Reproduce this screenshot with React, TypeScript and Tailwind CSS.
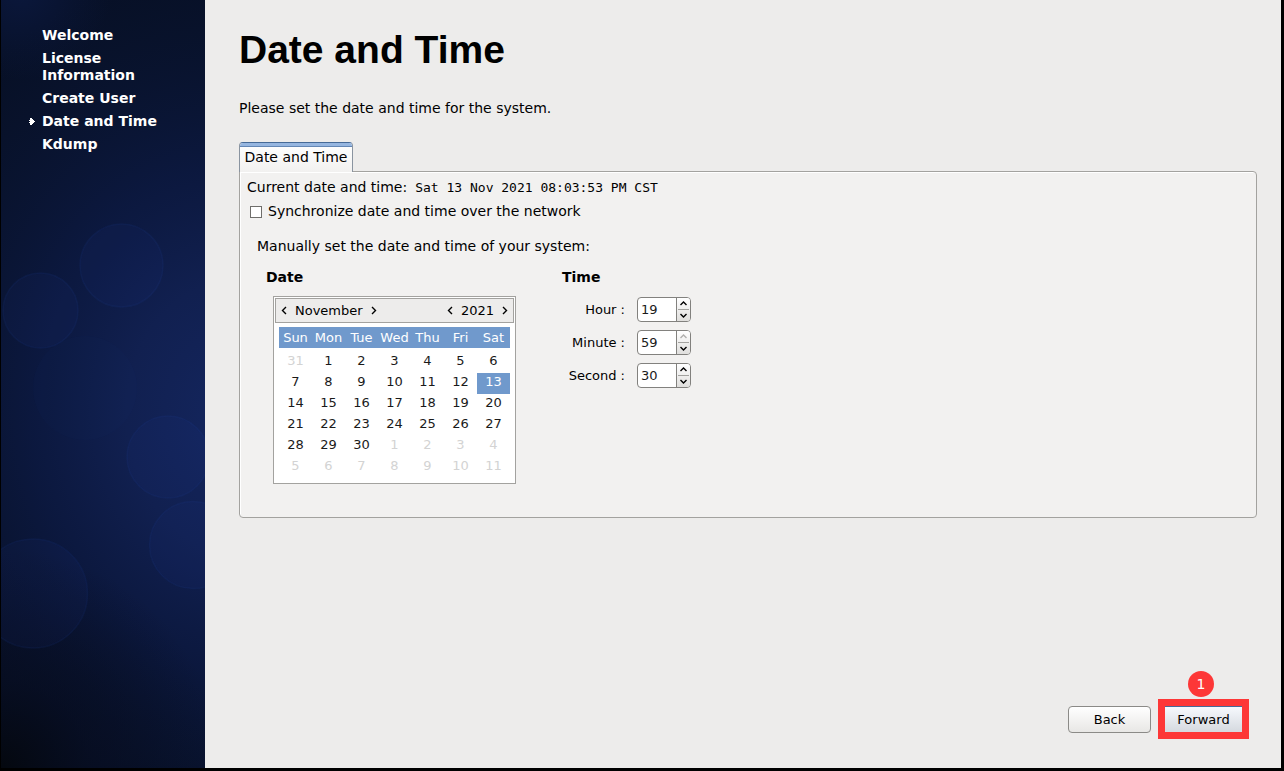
import { useState } from "react";

const STEPS = ["Welcome", "License Information", "Create User", "Date and Time", "Kdump"];
const CURRENT_STEP = "Date and Time";

const WEEKDAYS = ["Sun", "Mon", "Tue", "Wed", "Thu", "Fri", "Sat"];
const WEEKS = [
  [31, 1, 2, 3, 4, 5, 6],
  [7, 8, 9, 10, 11, 12, 13],
  [14, 15, 16, 17, 18, 19, 20],
  [21, 22, 23, 24, 25, 26, 27],
  [28, 29, 30, 1, 2, 3, 4],
  [5, 6, 7, 8, 9, 10, 11],
];

function isOtherMonth(week: number, day: number) {
  return (week === 0 && day > 7) || (week > 3 && day < 15);
}

type Direction = "left" | "right" | "up" | "down";

const CHEVRONS: Record<Direction, string> = {
  left: "M6 1 2.500 4.500 6 8",
  right: "M3 1 6.500 4.500 3 8",
  up: "M1.500 6 4.500 3 7.500 6",
  down: "M1.500 3 4.500 6 7.500 3",
};

function Chevron({ direction }: { direction: Direction }) {
  return (
    <svg viewBox="0 0 9 9" className="size-[9px]" fill="none" stroke="currentColor" strokeWidth="1.4" aria-hidden="true">
      <path d={CHEVRONS[direction]} />
    </svg>
  );
}

function SidebarBackdrop() {
  return (
    <svg
      className="absolute inset-0 size-full"
      viewBox="0 0 204 768"
      preserveAspectRatio="xMidYMid slice"
      aria-hidden="true"
    >
      <defs>
        <radialGradient id="glow" gradientUnits="userSpaceOnUse" cx="0" cy="0" r="1" gradientTransform="translate(240 420) rotate(-8) scale(380 460)">
          <stop offset="0" stopColor="#14265f" />
          <stop offset="0.3" stopColor="#112050" />
          <stop offset="0.55" stopColor="#0c1941" stopOpacity="0.9" />
          <stop offset="1" stopColor="#0a1532" stopOpacity="0" />
        </radialGradient>
        <radialGradient id="topGlow" gradientUnits="userSpaceOnUse" cx="20" cy="-10" r="90">
          <stop offset="0" stopColor="#0b183e" stopOpacity="0.9" />
          <stop offset="1" stopColor="#0b183e" stopOpacity="0" />
        </radialGradient>
        <radialGradient id="shade" gradientUnits="userSpaceOnUse" cx="0" cy="768" r="220">
          <stop offset="0" stopColor="#04080f" />
          <stop offset="0.4" stopColor="#060b1c" stopOpacity="0.6" />
          <stop offset="1" stopColor="#060b1c" stopOpacity="0" />
        </radialGradient>
      </defs>
      <rect width="204" height="768" fill="#071026" />
      <rect width="204" height="768" fill="url(#topGlow)" />
      <rect width="204" height="768" fill="url(#glow)" />
      <rect width="204" height="768" fill="url(#shade)" />
      <g fill="#2340a0" fillOpacity="0.08" stroke="#2c4cb4" strokeOpacity="0.1" strokeWidth="1.5">
        <circle cx="120.500" cy="265.500" r="41.500" />
        <circle cx="39.500" cy="310.500" r="37.500" />
        <circle cx="167" cy="457" r="41" />
        <circle cx="192" cy="545" r="43.500" />
        <circle cx="32" cy="593.500" r="54.500" />
      </g>
      <circle cx="84" cy="388" r="52" fill="#2340a0" fillOpacity="0.03" />
    </svg>
  );
}

function Sidebar() {
  return (
    <nav aria-label="Setup steps" className="relative w-[204px] shrink-0 overflow-hidden">
      <SidebarBackdrop />
      <ol className="relative flex flex-col gap-1.5 pt-[27px] pr-8 pl-7 text-sm leading-[17px] font-bold text-white">
        {STEPS.map((step) => (
          <li key={step} className="flex" aria-current={step === CURRENT_STEP ? "step" : undefined}>
            <span className="flex h-4 w-[13px] shrink-0 items-center">
              {step === CURRENT_STEP && (
                <svg viewBox="0 0 6 7" className="h-[7px] w-1.5" fill="currentColor" aria-hidden="true">
                  <path d="M1 0h2v1h1v1h1v1h1v1H5v1H4v1H3v1H1V5H0V4h1V3H0V2h1z" />
                </svg>
              )}
            </span>
            <span>{step}</span>
          </li>
        ))}
      </ol>
    </nav>
  );
}

function Stepper({ value, label, earlier, later }: { value: string; label: string; earlier: string; later: string }) {
  return (
    <div className="flex items-center">
      <button type="button" aria-label={earlier} className="flex h-5 w-[9px] items-center justify-center">
        <Chevron direction="left" />
      </button>
      <span aria-label={label} className="px-1.5">
        {value}
      </span>
      <button type="button" aria-label={later} className="flex h-5 w-[9px] items-center justify-center">
        <Chevron direction="right" />
      </button>
    </div>
  );
}

function Calendar() {
  const [selected, setSelected] = useState(13);
  return (
    <div className="w-[243px] border border-[#a3a29f] bg-white p-px pb-[5px] text-[#1a1a1a]">
      <div className="flex h-[25px] items-center justify-between border border-[#a3a29f] bg-[#edeceb] px-1 text-black">
        <Stepper value="November" label="Month" earlier="Previous month" later="Next month" />
        <Stepper value="2021" label="Year" earlier="Previous year" later="Next year" />
      </div>
      <table className="mx-auto mt-1 w-[231px] table-fixed border-collapse text-center">
        <thead>
          <tr className="h-[21px] bg-[#7099cc] text-white">
            {WEEKDAYS.map((day) => (
              <th key={day} scope="col" className="p-0 font-normal">
                {day}
              </th>
            ))}
          </tr>
        </thead>
        <tbody className="before:block before:h-1">
          {WEEKS.map((days, week) => (
            <tr key={week}>
              {days.map((day) => {
                const other = isOtherMonth(week, day);
                const active = !other && day === selected;
                return (
                  <td key={day} className="p-0">
                    <button
                      type="button"
                      disabled={other}
                      onClick={() => setSelected(day)}
                      className={
                        active
                          ? "block h-[21px] w-full bg-[#7099cc] pb-1 text-white"
                          : other
                            ? "block h-[21px] w-full pb-1 text-[#d3d3d3]"
                            : "block h-[21px] w-full pb-1"
                      }
                    >
                      {day}
                    </button>
                  </td>
                );
              })}
            </tr>
          ))}
        </tbody>
      </table>
    </div>
  );
}

function TimeField({ id, label, initial, max }: { id: string; label: string; initial: number; max: number }) {
  const [value, setValue] = useState(initial);
  return (
    <>
      <label htmlFor={id} className="text-right">
        {label} :
      </label>
      <div className="flex h-[25px] w-[54px] overflow-hidden rounded border border-[#82817e] bg-white">
        <input
          id={id}
          inputMode="numeric"
          value={value}
          onChange={(event) => setValue(Math.min(max, Number(event.target.value) || 0))}
          className="w-[38px] min-w-0 pl-[3px] text-[#1a1a1a] outline-none"
        />
        <div className="flex flex-1 flex-col border-l border-[#82817e] bg-linear-to-b from-white to-[#e0dfdd]">
          <button
            type="button"
            aria-label={`Increase ${label.toLowerCase()}`}
            disabled={value >= max}
            onClick={() => setValue(value + 1)}
            className="mx-px flex h-3 items-center justify-center border-b border-[#a3a29f] disabled:text-[#b0afad]"
          >
            <Chevron direction="up" />
          </button>
          <button
            type="button"
            aria-label={`Decrease ${label.toLowerCase()}`}
            disabled={value <= 0}
            onClick={() => setValue(value - 1)}
            className="flex h-[11px] items-center justify-center disabled:text-[#b0afad]"
          >
            <Chevron direction="down" />
          </button>
        </div>
      </div>
    </>
  );
}

export default function App() {
  return (
    <div className="flex min-h-screen bg-black pr-[3px] pb-[3px] pl-px font-['DejaVu_Sans',sans-serif] text-[13px] leading-[17px] text-black">
      <Sidebar />
      <main className="flex min-w-0 flex-1 flex-col bg-[#edeceb] pt-[26px] pr-6 pb-[29px] pl-[34px]">
        <h1 className="font-['Liberation_Sans',sans-serif] text-[39px] leading-[48px] font-bold">Date and Time</h1>
        <p className="mt-[26px] text-sm leading-[17px]">Please set the date and time for the system.</p>

        <div role="tablist" className="mt-[25px] flex">
          <button
            type="button"
            role="tab"
            id="tab-date"
            aria-selected="true"
            aria-controls="panel-date"
            className="relative z-10 -mb-px flex h-[30px] w-[114px] flex-col overflow-hidden rounded-t border border-b-0 border-[#8a94a0] border-t-[#466a97] bg-linear-to-b from-white to-[#f2f1f0] text-sm leading-[17px]"
          >
            <span className="h-1 w-full border-b border-[#6487b5] bg-[#96b6e0]" />
            <span className="w-full pt-0.5 text-center">Date and Time</span>
          </button>
        </div>
        <section
          id="panel-date"
          role="tabpanel"
          aria-labelledby="tab-date"
          className="rounded-sm rounded-tl-none border border-[#a3a29f] bg-[#f2f1f0] pt-[7px] pr-2 pb-[33px] pl-[7px] inset-shadow-[1px_1px_0_#ffffff]"
        >
          <p className="flex gap-2 text-sm leading-[17px]">
            <span>Current date and time:</span>
            <time className="font-['DejaVu_Sans_Mono',monospace] text-[13px]">Sat 13 Nov 2021 08:03:53 PM CST</time>
          </p>
          <label className="mt-[7px] flex w-fit items-center gap-1.5 pl-[3px] text-sm leading-[17px]">
            <input type="checkbox" className="size-3 appearance-none border border-[#6f6e6b] bg-white checked:bg-[#7099cc]" />
            Synchronize date and time over the network
          </label>
          <p className="mt-[18px] pl-2.5 text-sm leading-[17px]">Manually set the date and time of your system:</p>

          <div className="mt-3.5 flex gap-[46px] pl-[19px]">
            <section>
              <h2 className="text-sm leading-[17px] font-bold">Date</h2>
              <div className="mt-2.5 pl-[7px]">
                <Calendar />
              </div>
            </section>
            <section>
              <h2 className="text-sm leading-[17px] font-bold">Time</h2>
              <div className="mt-[11px] grid grid-cols-[63px_54px] items-center gap-x-3 gap-y-2">
                <TimeField id="hour" label="Hour" initial={19} max={23} />
                <TimeField id="minute" label="Minute" initial={59} max={59} />
                <TimeField id="second" label="Second" initial={30} max={59} />
              </div>
            </section>
          </div>
        </section>

        <div className="mt-auto flex items-center justify-end gap-[7px] pt-16 pr-2">
          <button
            type="button"
            className="h-[27px] w-[83px] rounded border border-[#8b8a87] bg-linear-to-b from-white to-[#e8e7e5]"
          >
            Back
          </button>
          <div className="relative border-[7px] border-[#fd3737]">
            <button
              type="button"
              className="block h-[26px] w-[77px] border-t border-[#466a97] bg-linear-to-b from-[#f6f9fd] to-[#d5d9df]"
            >
              Forward
            </button>
            <span className="absolute -top-[35px] left-[23px] flex size-[26px] items-center justify-center rounded-full bg-[#fd3737] font-['DejaVu_Sans',sans-serif] text-sm text-white">
              1
            </span>
          </div>
        </div>
      </main>
    </div>
  );
}
